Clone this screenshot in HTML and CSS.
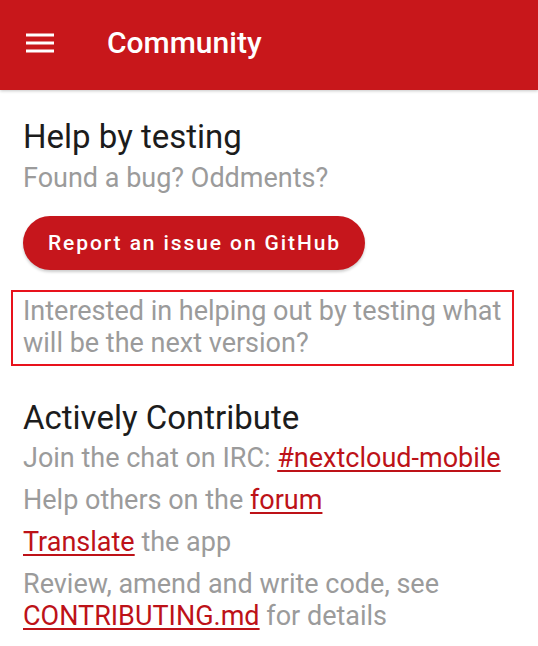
FILE: index.html
```html
<!DOCTYPE html>
<html lang="en">
<head>
<meta charset="utf-8">
<title>Community</title>
<link rel="stylesheet" href="styles.css">
</head>
<body>
<header class="appbar">
  <svg class="menu" width="28" height="20" viewBox="0 0 28 20" aria-hidden="true">
    <rect x="0" y="0.5" width="28" height="3" fill="#fff"/>
    <rect x="0" y="8.5" width="28" height="3" fill="#fff"/>
    <rect x="0" y="16.5" width="28" height="3" fill="#fff"/>
  </svg>
  <h1 class="title">Community</h1>
</header>
<main class="content">
  <section class="section">
    <h2 class="heading">Help by testing</h2>
    <p class="text">Found a bug? Oddments?</p>
    <button class="btn">Report an issue on GitHub</button>
    <p class="text highlight">Interested in helping out by testing what will be the next version?</p>
  </section>
  <section class="section second">
    <h2 class="heading">Actively Contribute</h2>
    <p class="text item">Join the chat on IRC: <a href="#" class="link">#nextcloud-mobile</a></p>
    <p class="text item">Help others on the <a href="#" class="link">forum</a></p>
    <p class="text item"><a href="#" class="link">Translate</a> the app</p>
    <p class="text item">Review, amend and write code, see <a href="#" class="link">CONTRIBUTING.md</a> for details</p>
  </section>
</main>
</body>
</html>
```
FILE: styles.css
```css
html, body {
  margin: 0;
  padding: 0;
  background: #fff;
  font-family: Roboto, "Noto Sans", "Liberation Sans", sans-serif;
}
.appbar {
  height: 90px;
  background: #c8171b;
  display: flex;
  align-items: center;
  padding: 0 0 4px 26px;
  box-sizing: border-box;
  box-shadow: 0 1px 3px rgba(0,0,0,0.22);
  position: relative;
}
.menu {
  display: block;
  flex: none;
}
.title {
  margin: 0 0 0 53px;
  color: #fff;
  font-size: 30px;
  font-weight: 500;
  line-height: 36px;
}
.content {
  padding: 0 23px;
}
.section {
  display: flex;
  flex-direction: column;
  align-items: flex-start;
}
.heading {
  margin: 28px 0 0 0;
  font-size: 33px;
  line-height: 38px;
  font-weight: 400;
  color: #1c1c1c;
}
.text {
  margin: 6px 0 0 0;
  font-size: 27px;
  line-height: 32px;
  color: #9b9b9b;
}
.btn {
  margin-top: 22px;
  height: 54px;
  padding: 0 24px 0 25px;
  border: none;
  border-radius: 27px;
  background: #c6161c;
  color: #fff;
  font-family: Roboto, "Noto Sans", sans-serif;
  font-size: 21px;
  font-weight: 500;
  letter-spacing: 1.9px;
  box-shadow: 0 2px 3px rgba(0,0,0,0.2);
}
.highlight {
  margin: 20px 1px 0 -12px;
  align-self: stretch;
  border: 2px solid #e8121c;
  padding: 3px 10px 5px 10px;
}
.second .heading {
  margin-top: 33px;
}
.item {
  margin-top: 10px;
}
.second .heading + .item {
  margin-top: 5px;
}
.link {
  color: #bd1218;
  text-decoration: underline;
  text-decoration-thickness: 1.5px;
  text-underline-offset: 3px;
}
```
